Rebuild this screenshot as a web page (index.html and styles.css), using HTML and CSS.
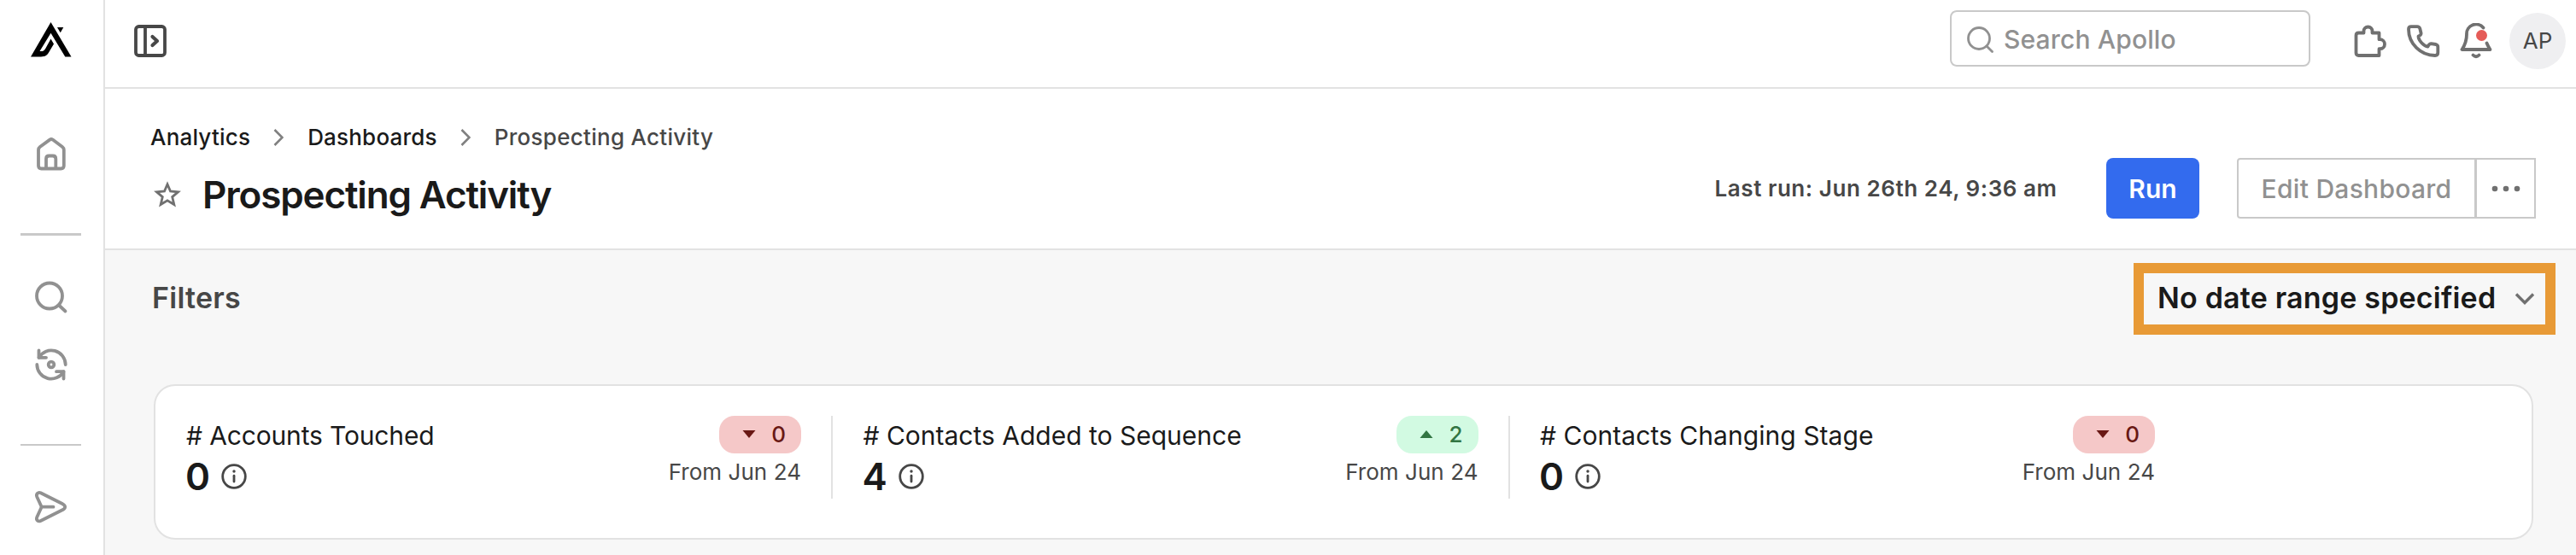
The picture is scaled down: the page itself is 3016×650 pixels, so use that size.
FILE: index.html
```html
<!DOCTYPE html>
<html lang="en">
<head>
<meta charset="utf-8">
<title>Prospecting Activity</title>
<link rel="stylesheet" href="styles.css">
</head>
<body>
<div class="app">
  <nav class="sidebar">
    <svg class="logo" width="48" height="41" viewBox="0 0 48 41"><path d="M23.500 0L47.500 40.500H40.300L23.500 12.800L10.500 34H13.500C15.500 33.500 16.300 32.300 17.300 30.700L23.500 19.500L27 25.500L21.500 34.800C19.500 38.600 17 40.500 12 40.500H0Z" fill="#000"/><path d="M31 6H38.300L34.700 12.300Z" fill="#000"/></svg>
    <svg class="ic home" width="40" height="40" viewBox="0 0 40 40"><path d="M5 14.500C5 13 5.500 12 6.800 11L18.300 2.600Q20 1.500 21.700 2.600L33 11C34.300 12 34.800 13 34.800 14.500V33Q34.800 36.500 31.300 36.500H8.500Q5 36.500 5 33ZM14 36V25Q14 21.500 17.500 21.500H21.800Q25.300 21.500 25.300 25V36"/></svg>
    <hr class="rule thick">
    <svg class="ic find" width="40" height="40" viewBox="0 0 40 40"><circle cx="18" cy="17.500" r="15"/><path d="M29 28.500L36.500 35.500"/></svg>
    <svg class="ic sync" width="40" height="40" viewBox="0 0 40 40"><path d="M3.300 20A16.700 16.700 0 0 0 34.500 28.200M36.700 20A16.700 16.700 0 0 0 5.500 11.800"/><path d="M5.500 3.500V11.800H14M34.500 36.500V28.200H26"/><circle cx="20" cy="20" r="3.300"/></svg>
    <hr class="rule thin">
    <svg class="ic send" width="40" height="40" viewBox="0 0 40 40"><path d="M3.200 7.700C2 4.500 4.500 2 7.600 3.200L33.500 16.300C37 18.200 37 21.300 33.500 23L7.600 36C4.500 37.300 2 35 3.200 31.800L8.700 19.700ZM9 19.700H22.500"/></svg>
  </nav>
  <div class="main">
    <header class="topbar">
      <svg class="toggle" width="38" height="38" viewBox="0 0 38 38"><rect x="2" y="2" width="34" height="34" rx="3.500"/><path d="M13 2V36"/><path d="M21.500 14L27 19L21.500 24" stroke-width="4.200"/></svg>
      <div class="search">
        <svg width="32" height="32" viewBox="0 0 32 32"><circle cx="14" cy="14" r="12.500"/><path d="M23.500 23.500L29.500 29.500"/></svg>
        <span class="placeholder">Search Apollo</span>
      </div>
      <div class="tools">
        <svg width="40" height="40" viewBox="0 0 40 40"><path d="M6.500 10.500H12.500V8.500A5 5 0 0 1 22.500 8.500V10.500H30.500V18.200H31.500A5.200 5.200 0 0 1 31.500 29.200H30.500V37H6.500Q3.500 37 3.500 34V13.500Q3.500 10.500 6.500 10.500Z"/></svg>
        <svg width="40" height="40" viewBox="0 0 40 40"><path d="M6 3.200H13Q15.500 3.200 16.300 5.500L17.600 11C17.800 13 15.500 14 14.500 14.500C14.500 19.500 21 26 25.500 26.500C26.500 24.800 27.500 23 29.500 23.200L35 24Q37.300 24.600 37.300 27V33.500Q37.300 37 34 37C17 37 3 23 3 6.200Q3 3.200 6 3.200Z"/></svg>
        <div class="bell">
          <svg width="40" height="42" viewBox="0 0 40 42"><path d="M28.500 5.500A11 11 0 0 0 9 13C9 21 7.500 25 3.500 31H36.500C34.500 28 33.500 26 32.500 23.500M16.500 37.500Q20 41 23.500 37.500"/></svg>
          <span class="dot"></span>
        </div>
        <div class="avatar">AP</div>
      </div>
    </header>
    <section class="pagehead">
      <div class="titles">
        <div class="crumbs">
          <span class="c1">Analytics</span>
          <svg width="12" height="20" viewBox="0 0 12 20"><path d="M1.500 1L10.500 10L1.500 19"/></svg>
          <span class="c2">Dashboards</span>
          <svg width="12" height="20" viewBox="0 0 12 20"><path d="M1.500 1L10.500 10L1.500 19"/></svg>
          <span class="c3">Prospecting Activity</span>
        </div>
        <div class="titlerow">
          <svg class="star" width="32" height="32" viewBox="0 0 32 32"><path d="M16 3.800L19.500 12L28.500 12.800L21.700 18.600L23.800 27.500L16 22.800L8.200 27.500L10.300 18.600L3.500 12.800L12.500 12Z"/></svg>
          <h1>Prospecting Activity</h1>
        </div>
      </div>
      <div class="actions">
        <span class="lastrun">Last run: Jun 26th 24, 9:36 am</span>
        <button class="run">Run</button>
        <div class="group">
          <button class="edit">Edit Dashboard</button>
          <button class="more"><svg width="34" height="8" viewBox="0 0 34 8"><circle cx="4" cy="4" r="3.300"/><circle cx="17" cy="4" r="3.300"/><circle cx="30" cy="4" r="3.300"/></svg></button>
        </div>
      </div>
    </section>
    <section class="content">
      <div class="filterbar">
        <h2>Filters</h2>
        <div class="range">
          <span class="rangetext">No date range specified</span>
          <svg width="24" height="16" viewBox="0 0 24 16"><path d="M2 2.500L12 12.500L22 2.500"/></svg>
        </div>
      </div>
      <div class="card">
        <div class="metric">
          <div class="left"><div class="label l1"># Accounts Touched</div>
            <div class="value">0<svg width="30" height="30" viewBox="0 0 30 30"><circle cx="15" cy="15" r="13.300"/><path d="M15 14.200V21"/><circle class="i" cx="15" cy="9" r="1.700"/></svg></div></div>
          <div class="right"><span class="badge down"><svg width="16" height="9" viewBox="0 0 16 9"><path d="M.5 0H15.500L8 9Z"/></svg>0</span><span class="from">From Jun 24</span></div>
        </div>
        <div class="metric">
          <div class="left"><div class="label l2"># Contacts Added to Sequence</div>
            <div class="value">4<svg width="30" height="30" viewBox="0 0 30 30"><circle cx="15" cy="15" r="13.300"/><path d="M15 14.200V21"/><circle class="i" cx="15" cy="9" r="1.700"/></svg></div></div>
          <div class="right"><span class="badge up"><svg width="16" height="9" viewBox="0 0 16 9"><path d="M.5 9H15.500L8 0Z"/></svg>2</span><span class="from">From Jun 24</span></div>
        </div>
        <div class="metric">
          <div class="left"><div class="label l3"># Contacts Changing Stage</div>
            <div class="value">0<svg width="30" height="30" viewBox="0 0 30 30"><circle cx="15" cy="15" r="13.300"/><path d="M15 14.200V21"/><circle class="i" cx="15" cy="9" r="1.700"/></svg></div></div>
          <div class="right"><span class="badge down"><svg width="16" height="9" viewBox="0 0 16 9"><path d="M.5 0H15.500L8 9Z"/></svg>0</span><span class="from">From Jun 24</span></div>
        </div>
      </div>
    </section>
  </div>
</div>
</body>
</html>
```
FILE: styles.css
```css
* { box-sizing: border-box; }
body { margin: 0; background: #fff; color: #1a1a1a; font-family: Inter, "Liberation Sans", sans-serif; font-size: 26px; overflow: hidden; }
h1, h2 { margin: 0; }
button { font-family: inherit; margin: 0; padding: 0; background: none; border: 0; }
svg { display: block; flex: none; fill: none; stroke-linecap: round; stroke-linejoin: round; }
span, h1, h2, .label { white-space: nowrap; }

.app { display: flex; width: 3016px; height: 650px; }
.sidebar { width: 123px; flex: none; border-right: 2px solid #e2e2e2; display: flex; flex-direction: column; align-items: center; padding: 26px 2px 0 0; }
.ic { stroke: #919191; stroke-width: 3.8; }
.home { margin-top: 94px; }
.rule { width: 71px; border: 0; margin: 0; background: #c9c9c9; flex: none; }
.thick { height: 3px; margin-top: 72px; }
.thin { height: 2px; margin-top: 73px; }
.find { margin-top: 53px; }
.sync { margin-top: 38px; }
.send { margin-top: 52px; }

.main { flex: 1; display: flex; flex-direction: column; min-width: 0; }
.topbar { height: 104px; flex: none; border-bottom: 2px solid #e2e2e2; display: flex; align-items: flex-start; padding: 12px 12px 0 34px; }
.toggle { margin-top: 17px; stroke: #474747; stroke-width: 3.8; }
.search { margin-left: auto; width: 422px; height: 66px; border: 2px solid #c9c9c9; border-radius: 8px; display: flex; align-items: center; padding-left: 18px; gap: 11px; }
.search svg { stroke: #919191; stroke-width: 2.8; margin-top: 4px; }
.placeholder { font-size: 30px; font-weight: 500; color: #919191; line-height: 40px; margin-top: 2px; letter-spacing: .15px; }
.tools { display: flex; align-items: center; height: 72px; margin-left: 50px; gap: 22px; stroke: #707070; stroke-width: 3.8; }
.bell { position: relative; }
.dot { position: absolute; left: 19.5px; top: 8px; width: 13px; height: 13px; border-radius: 50%; background: #e55c58; }
.avatar { width: 66px; height: 66px; border-radius: 50%; background: #efeff1; color: #474747; font-size: 26px; line-height: 66px; text-align: center; margin-left: -3px; }

.pagehead { height: 189px; flex: none; border-bottom: 2px solid #e2e2e2; display: flex; justify-content: space-between; align-items: flex-start; padding: 40px 47px 0 53px; }
.crumbs { display: flex; align-items: center; height: 34px; line-height: 34px; font-size: 26px; font-weight: 500; letter-spacing: .2px; }
.crumbs svg { stroke: #808080; stroke-width: 2.6; margin: 0 28px 0 27px; stroke-linecap: butt; stroke-linejoin: miter; }
.c3 { color: #474747; letter-spacing: .28px; }
.titlerow { display: flex; align-items: center; height: 50px; margin-top: 25px; padding-left: 4px; gap: 25px; }
.star { stroke: #707070; stroke-width: 2.8; stroke-linejoin: miter; }
h1 { font-size: 44px; font-weight: 600; line-height: 50px; letter-spacing: -1.15px; }
.actions { display: flex; align-items: center; height: 71px; margin-top: 41px; }
.lastrun { font-weight: 600; color: #474747; letter-spacing: .56px; }
.run { width: 109px; height: 71px; margin: 0 44px 0 57.500px; border-radius: 8px; background: #336bee; color: #fff; font-size: 30px; font-weight: 600; }
.group { display: flex; height: 71px; width: 350px; border: 2px solid #c9c9c9; border-radius: 4px 0 0 4px; }
.edit { width: 276px; color: #919191; font-size: 30px; font-weight: 500; white-space: nowrap; letter-spacing: .28px; }
.more { flex: 1; border-left: 3px solid #c9c9c9; display: flex; align-items: center; justify-content: center; }
.more svg { fill: #707070; }

.content { flex: 1; background: #f7f7f7; padding: 15px 24px 0 57px; }
.filterbar { display: flex; justify-content: space-between; align-items: flex-start; }
h2 { font-size: 34px; line-height: 50px; font-weight: 600; color: #474747; margin: 16px 0 0 -2px; letter-spacing: .25px; }
.range { width: 494px; height: 84px; border: 12px solid #e89a36; display: flex; align-items: center; justify-content: space-between; padding: 0 12px 0 16px; }
.rangetext { font-size: 34px; font-weight: 600; line-height: 40px; letter-spacing: .19px; margin-top: -2px; }
.range svg { stroke: #707070; stroke-width: 3.4; stroke-linecap: butt; stroke-linejoin: miter; }
.card { width: 2786px; height: 182px; margin-top: 58px; background: #fff; border: 2px solid #e2e2e2; border-radius: 25px; display: flex; padding: 35px 0 0 36px; }
.metric { width: 757px; height: 97px; margin-right: 35.500px; border-right: 2px solid #e2e2e2; padding-right: 35px; display: flex; justify-content: space-between; flex: none; }
.metric:last-child { border-right-color: transparent; }
.label { font-size: 30px; line-height: 46px; }
.l1 { letter-spacing: -.15px; }
.l3 { letter-spacing: .05px; }
.value { font-size: 44px; line-height: 50px; font-weight: 600; display: flex; align-items: center; gap: 13px; margin-left: -1px; }
.value svg { stroke: #474747; stroke-width: 2.8; }
.value .i { fill: #474747; stroke: none; }
.right { display: flex; flex-direction: column; align-items: flex-end; }
.badge { height: 44px; border-radius: 18px; font-weight: 500; line-height: 44px; display: flex; align-items: center; padding: 0 18px 0 27px; gap: 18px; }
.badge svg { margin-top: -2px; }
.down { background: #f5c8c8; color: #691814; }
.up { background: #d2fae2; color: #327543; }
.badge svg { fill: currentColor; }
.from { font-size: 26px; line-height: 44px; color: #474747; letter-spacing: .05px; }
```
